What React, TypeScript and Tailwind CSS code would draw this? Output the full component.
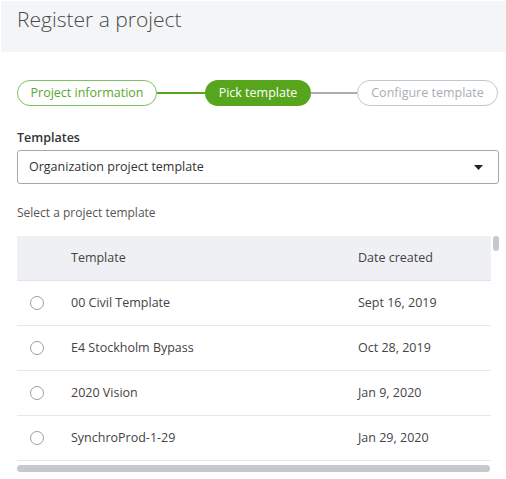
const rows = [
  { name: '00 Civil Template', date: 'Sept 16, 2019' },
  { name: 'E4 Stockholm Bypass', date: 'Oct 28, 2019' },
  { name: '2020 Vision', date: 'Jan 9, 2020' },
  { name: 'SynchroProd-1-29', date: 'Jan 29, 2020' },
];

const App = () => {
  return (
    <div className="w-[506px] h-[479px] bg-white overflow-hidden pt-px pl-px font-['Open_Sans',sans-serif] text-[#333]">
      {/* Header */}
      <div className="h-[51px] bg-[#f4f5f7] flex items-center pl-4">
        <h1 className="text-[21px] font-light text-[#4a4a4a] -mt-[13px]">Register a project</h1>
      </div>

      <div className="pl-4 pr-[7px]">
        {/* Stepper */}
        <div className="flex items-center mt-[28px] h-[26px]">
          <div className="h-[26px] w-[140px] rounded-full border border-[#7ec260] text-[#5aa82b] text-[12.5px] flex items-center justify-center">
            Project information
          </div>
          <div className="w-[48px] h-[2px] bg-[#56a51c]" />
          <div className="h-[26px] w-[106px] rounded-full bg-[#56a51c] text-white text-[12.5px] flex items-center justify-center">
            Pick template
          </div>
          <div className="w-[46px] h-[2px] bg-[#a9aeb6]" />
          <div className="h-[26px] w-[141px] rounded-full border border-[#c3c7cd] text-[#a9aeb5] text-[12.5px] flex items-center justify-center">
            Configure template
          </div>
        </div>

        {/* Templates select */}
        <div className="mt-[23px] text-[12.5px] font-semibold text-[#333] leading-[18px]">Templates</div>
        <div className="mt-[3px] h-[34px] w-[482px] border border-[#a3a6aa] rounded-[3px] flex items-center justify-between pl-[11px] pr-[15px]">
          <span className="text-[12.5px] text-[#333]">Organization project template</span>
          <svg width="9" height="5" viewBox="0 0 9 5">
            <path d="M0 0 L9 0 L4.5 5 Z" fill="#222" />
          </svg>
        </div>

        <div className="mt-[20px] text-[12px] text-[#555] leading-[18px]">Select a project template</div>

        {/* Table */}
        <div className="mt-[14px] flex">
          <div className="w-[474px]">
            <div className="h-[45px] bg-[#eef0f3] flex items-center text-[12.5px] text-[#444] border-b border-[#dfe2e6]">
              <div className="w-[54px]" />
              <div className="flex-1">Template</div>
              <div className="w-[133px]">Date created</div>
            </div>
            {rows.map((r) => (
              <div key={r.name} className="h-[45px] flex items-center text-[12.5px] text-[#444] border-b border-[#e6e8eb]">
                <div className="w-[54px] flex pl-[13px]">
                  <span className="w-[14px] h-[14px] rounded-full border border-[#9a9da2] bg-white" />
                </div>
                <div className="flex-1">{r.name}</div>
                <div className="w-[133px]">{r.date}</div>
              </div>
            ))}
          </div>
          <div className="ml-[2px] w-[6px]">
            <div className="h-[15px] w-[6px] rounded-full bg-[#c5c9ce]" />
          </div>
        </div>
        <div className="mt-[4px] h-[7px] w-[473px] rounded-full bg-[#c5c9ce]" />
      </div>
    </div>
  );
};

export default App;
